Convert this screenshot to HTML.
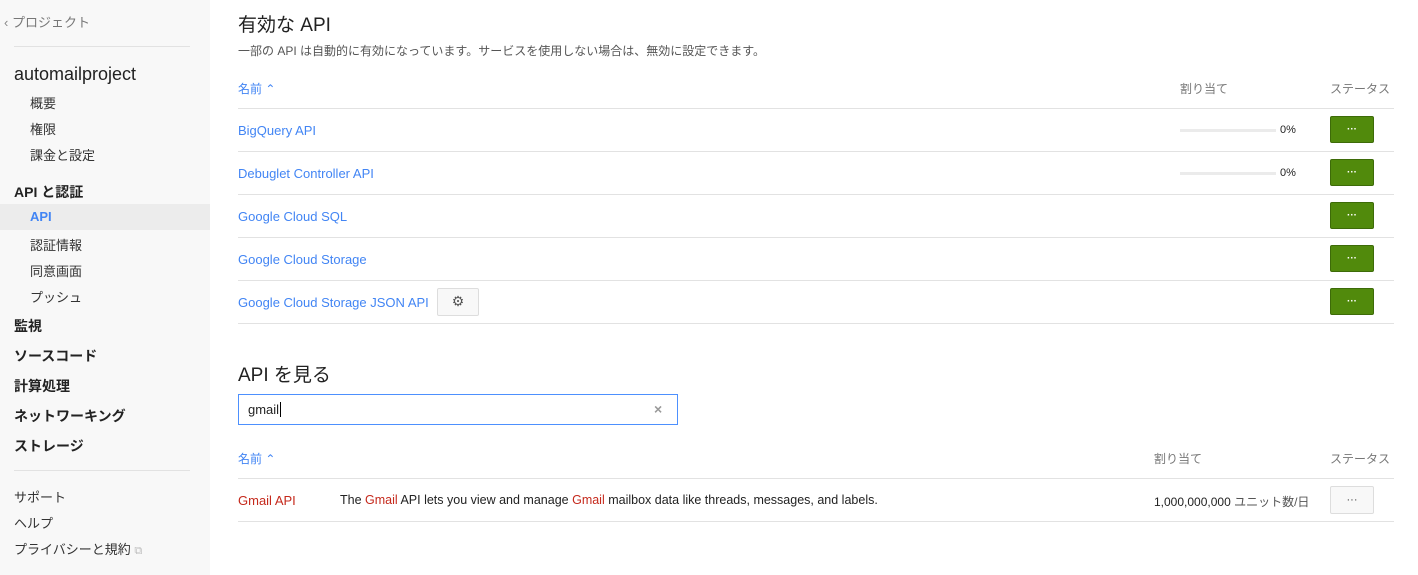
<!DOCTYPE html>
<html><head><meta charset="utf-8"><style>
*{margin:0;padding:0;box-sizing:border-box}
body{width:1418px;height:575px;background:#fff;font-family:"Liberation Sans","Noto Sans CJK JP",sans-serif;position:relative;overflow:hidden;color:#222}
.a{position:absolute;white-space:nowrap}
#side{position:absolute;left:0;top:0;width:210px;height:575px;background:#f8f8f8}
.s{font-size:13px;color:#333}
.b{font-size:14px;font-weight:bold;color:#222}
.hr{position:absolute;height:1px;background:#e2e2e2}
.lnk{color:#4285f4;font-size:13px}
.hd{font-size:12px;color:#777}
.gb{position:absolute;left:1330px;width:44px;height:27px;background:#518a0c;border:1px solid #3d6b08;border-radius:2px;color:#fff;font-size:10px;text-align:center;line-height:25px;font-weight:bold}
.bar{position:absolute;left:1180px;width:96px;height:3px;background:#ebebeb}
.red{color:#c5291c}
</style></head><body>
<div id="side">
<div class="a" style="left:4px;top:12px;font-size:13px;color:#888">‹ <span style="color:#777">プロジェクト</span></div>
<div class="hr" style="left:14px;top:46px;width:176px"></div>
<div class="a" style="left:14px;top:64px;font-size:18px;color:#222">automailproject</div>
<div class="a s" style="left:30px;top:93px">概要</div>
<div class="a s" style="left:30px;top:119px">権限</div>
<div class="a s" style="left:30px;top:145px">課金と設定</div>
<div class="a b" style="left:14px;top:182px">API と認証</div>
<div style="position:absolute;left:0;top:204px;width:210px;height:26px;background:#ececec"></div>
<div class="a" style="left:30px;top:209px;font-size:13px;font-weight:bold;color:#4285f4">API</div>
<div class="a s" style="left:30px;top:235px">認証情報</div>
<div class="a s" style="left:30px;top:261px">同意画面</div>
<div class="a s" style="left:30px;top:287px">プッシュ</div>
<div class="a b" style="left:14px;top:316px">監視</div>
<div class="a b" style="left:14px;top:346px">ソースコード</div>
<div class="a b" style="left:14px;top:376px">計算処理</div>
<div class="a b" style="left:14px;top:406px">ネットワーキング</div>
<div class="a b" style="left:14px;top:436px">ストレージ</div>
<div class="hr" style="left:14px;top:470px;width:176px"></div>
<div class="a s" style="left:14px;top:487px">サポート</div>
<div class="a s" style="left:14px;top:513px">ヘルプ</div>
<div class="a s" style="left:14px;top:539px">プライバシーと規約 <span style="color:#bbb;font-size:11px">⧉</span></div>
</div>

<div class="a" style="left:238px;top:10px;font-size:19px;color:#222">有効な API</div>
<div class="a" style="left:238px;top:42px;font-size:12px;color:#555">一部の API は自動的に有効になっています。サービスを使用しない場合は、無効に設定できます。</div>
<div class="a hd" style="left:238px;top:80px;color:#4285f4">名前 ⌃</div>
<div class="a hd" style="left:1180px;top:80px">割り当て</div>
<div class="a hd" style="left:1330px;top:80px">ステータス</div>
<div class="hr" style="left:238px;top:108px;width:1156px"></div>
<div class="hr" style="left:238px;top:151px;width:1156px"></div>
<div class="hr" style="left:238px;top:194px;width:1156px"></div>
<div class="hr" style="left:238px;top:237px;width:1156px"></div>
<div class="hr" style="left:238px;top:280px;width:1156px"></div>
<div class="hr" style="left:238px;top:323px;width:1156px"></div>
<div class="a lnk" style="left:238px;top:123px">BigQuery API</div>
<div class="a lnk" style="left:238px;top:166px">Debuglet Controller API</div>
<div class="a lnk" style="left:238px;top:209px">Google Cloud SQL</div>
<div class="a lnk" style="left:238px;top:252px">Google Cloud Storage</div>
<div class="a lnk" style="left:238px;top:295px">Google Cloud Storage JSON API</div>
<div style="position:absolute;left:437px;top:288px;width:42px;height:28px;border:1px solid #ddd;border-radius:2px;background:#f8f8f8;text-align:center;line-height:25px;color:#555;font-size:14px">⚙</div>
<div class="bar" style="top:129px"></div><div class="a" style="left:1280px;top:124px;font-size:11px">0%</div>
<div class="bar" style="top:172px"></div><div class="a" style="left:1280px;top:167px;font-size:11px">0%</div>
<div class="gb" style="top:116px">···</div>
<div class="gb" style="top:159px">···</div>
<div class="gb" style="top:202px">···</div>
<div class="gb" style="top:245px">···</div>
<div class="gb" style="top:288px">···</div>

<div class="a" style="left:238px;top:360px;font-size:19px;color:#222">API を見る</div>
<div style="position:absolute;left:238px;top:394px;width:440px;height:31px;border:1px solid #4d90fe"></div>
<div class="a" style="left:248px;top:402px;font-size:13px">gmail<span style="border-left:1px solid #000;margin-left:1px"></span></div>
<div class="a" style="left:654px;top:401px;font-size:14px;color:#999;font-weight:bold">×</div>
<div class="a hd" style="left:238px;top:450px;color:#4285f4">名前 ⌃</div>
<div class="a hd" style="left:1154px;top:450px">割り当て</div>
<div class="a hd" style="left:1330px;top:450px">ステータス</div>
<div class="hr" style="left:238px;top:478px;width:1156px"></div>
<div class="hr" style="left:238px;top:521px;width:1156px"></div>
<div class="a red" style="left:238px;top:493px;font-size:13px">Gmail API</div>
<div class="a" style="left:340px;top:493px;font-size:12.5px;color:#222">The <span class="red">Gmail</span> API lets you view and manage <span class="red">Gmail</span> mailbox data like threads, messages, and labels.</div>
<div class="a" style="left:1154px;top:493px;font-size:12px;color:#222">1,000,000,000 <span style="color:#555">ユニット数/日</span></div>
<div style="position:absolute;left:1330px;top:486px;width:44px;height:28px;border:1px solid #ddd;border-radius:2px;background:#f8f8f8;text-align:center;line-height:26px;font-size:11px;color:#444">···</div>
</body></html>
